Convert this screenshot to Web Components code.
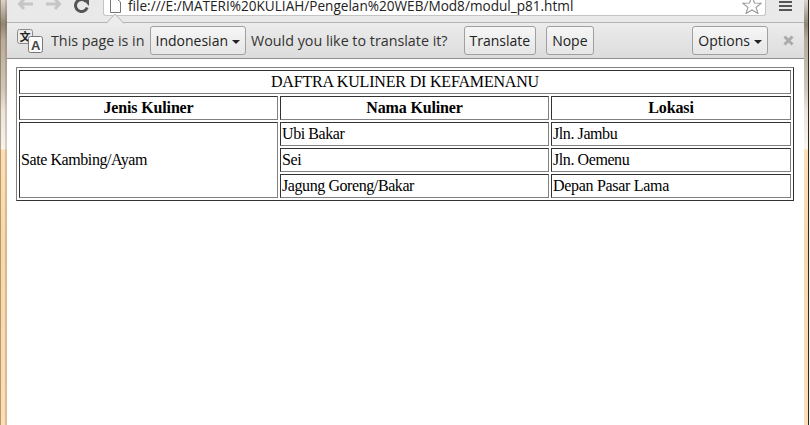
<!DOCTYPE html>
<html>
<head>
<meta charset="utf-8">
<title>modul_p81</title>
<style>
html, body { margin: 0; height: 100%; overflow: hidden; background: #fff; }
</style>
</head>
<body>
<browser-window>
  <browser-toolbar slot="chrome" url="file:///E:/MATERI%20KULIAH/Pengelan%20WEB/Mod8/modul_p81.html"></browser-toolbar>
  <translate-bar slot="chrome"></translate-bar>
  <kuliner-table></kuliner-table>
</browser-window>

<script>
const template_win = document.createElement("template");
template_win.innerHTML = `
<style>
:host {
  display: flex;
  flex-flow: column;
  height: 425px;
  width: 810px;
  box-sizing: border-box;
  padding: 0 6px 0 7px;
  background:
    linear-gradient(90deg, rgba(110,70,20,.45) 0 1px, transparent 1px 5px, rgba(110,70,20,.22) 5px 7px, transparent 7px 803px, rgba(90,80,70,.3) 803px 804px, transparent 804px 808px, #2e2a26 808px 809px, #f4f0ea 809px),
    linear-gradient(#d9d5cc 0, #8f8578 24px, #b5ab9e 40px, #cfc8bc 90px, #e9e4dc 110px, #f8f4ee 149px, #fbdfb6 150px, #f5d9ae 250px, #fadfb8 425px);
}
.inner { display: flex; flex-flow: column; flex: 1; }
.page { flex: 1; background: #fff; padding: 8px 0 0 9px; }
</style>
<div class="inner">
  <slot name="chrome"></slot>
  <div class="page"><slot></slot></div>
</div>
`;
class browserWindow extends HTMLElement {
  constructor() {
    super();
    this.attachShadow({ mode: "open" });
    this.shadowRoot.appendChild(template_win.content.cloneNode(true));
  }
}
window.customElements.define("browser-window", browserWindow);

const template_tb = document.createElement("template");
template_tb.innerHTML = `
<style>
:host {
  display: flex;
  align-items: flex-start;
  height: 23px;
  box-sizing: border-box;
  background: #e9e9e9;
  border-bottom: 1px solid #b4b4b4;
  position: relative;
}
.nav { display: flex; gap: 9px; padding: 0 0 0 10px; width: 96px; box-sizing: border-box; flex: none; }
.nav svg { display: block; }
.omni {
  flex: none;
  width: 663px;
  height: 16px;
  box-sizing: border-box;
  background: #fff;
  border: 1px solid #c4c4c4;
  border-top: 0;
  border-radius: 0 0 3px 3px;
  display: flex;
  align-items: flex-start;
  position: relative;
  padding-left: 6px;
}
.url {
  font: 13.6px/14px "Open Sans", "Liberation Sans", sans-serif;
  color: #222;
  white-space: nowrap;
  margin-left: 7px;
  margin-top: -1px;
}
.star { position: absolute; right: 3px; top: 0; }
.menu { margin-left: 13px; padding-top: 1px; }
.menu i { display: block; width: 13px; height: 2px; background: #555; margin-bottom: 2px; }
</style>
<div class="nav">
  <svg width="18" height="12" viewBox="0 0 18 12"><path d="M7 -1 L2.5 4 L7 9 M3 4 H16" fill="none" stroke="#c6c6c6" stroke-width="3"/></svg>
  <svg width="20" height="12" viewBox="0 0 20 12"><path d="M11 -1 L15.5 4 L11 9 M15 4 H2" fill="none" stroke="#c6c6c6" stroke-width="3"/></svg>
  <svg width="18" height="13" viewBox="0 0 18 13"><path d="M13 1.5 A6 6 0 1 0 14.2 7.5" fill="none" stroke="#555" stroke-width="3"/><path d="M9.5 -1 H16 V6 Z" fill="#555"/></svg>
</div>
<div class="omni">
  <svg width="11" height="13" viewBox="0 0 11 13"><path d="M.5 0 V12.5 H10.5 V2 L8 0" fill="#fff" stroke="#777"/></svg>
  <span class="url"></span>
  <svg class="star" width="20" height="14" viewBox="0 0 20 14"><path d="M10 -4 L12.5 3 L19 3.3 L14 7.5 L16 13.5 L10 10 L4 13.5 L6 7.5 L1 3.3 L7.5 3 Z" fill="#fff" stroke="#9a9a9a" stroke-width="1.1"/></svg>
</div>
<div class="menu"><i></i><i></i><i></i></div>
`;
class browserToolbar extends HTMLElement {
  constructor() {
    super();
    this.attachShadow({ mode: "open" });
    this.shadowRoot.appendChild(template_tb.content.cloneNode(true));
    this.shadowRoot.querySelector(".url").textContent = this.getAttribute("url");
  }
}
window.customElements.define("browser-toolbar", browserToolbar);

const template_btn = document.createElement("template");
template_btn.innerHTML = `
<style>
:host {
  display: inline-flex;
  align-items: center;
  height: 29px;
  box-sizing: border-box;
  padding: 0 5px;
  border: 1px solid #a0a0a0;
  border-radius: 3px;
  background: linear-gradient(#f6f6f6, #e6e6e6);
  white-space: nowrap;
  color: #222;
}
.caret { display: none; width: 0; height: 0; margin-left: 4px; margin-top: 2px; border: 4px solid transparent; border-top: 4px solid #222; border-bottom: 0; }
:host([menu]) .caret { display: block; }
</style>
<slot></slot><span class="caret"></span>
`;
class barButton extends HTMLElement {
  constructor() {
    super();
    this.attachShadow({ mode: "open" });
    this.shadowRoot.appendChild(template_btn.content.cloneNode(true));
  }
}
window.customElements.define("bar-button", barButton);

const template_tr = document.createElement("template");
template_tr.innerHTML = `
<style>
:host {
  display: flex;
  align-items: center;
  height: 36px;
  box-sizing: border-box;
  padding: 0 10px 0 9px;
  background: linear-gradient(#ececec, #dcdcdc);
  border-bottom: 1px solid #8e8e8e;
  font: 14px "Open Sans", "Liberation Sans", sans-serif;
  color: #333;
  position: relative;
}
.logo { margin-right: 8px; flex: none; }
.msg { font-size: 14.3px; }
.sp { width: 5px; flex: none; }
.push { flex: 1; }
.close { margin-left: 15px; }
.notch { position: absolute; left: 99px; top: -10px; }
</style>
<svg class="notch" width="20" height="11" viewBox="0 0 20 11"><path d="M0 10.5 L9 1 L18 10.5" fill="#ececec" stroke="#b4b4b4"/></svg>
<svg class="logo" width="27" height="26" viewBox="0 0 27 26">
  <rect x="1.5" y="1.5" width="15" height="14" rx="2" fill="#ececec" stroke="#8c8c8c"/>
  <text x="3.5" y="13" font-size="11" font-weight="700" font-family="Noto Sans CJK SC" fill="#222">文</text>
  <rect x="12.5" y="8.5" width="14" height="16" rx="2" fill="#fafafa" stroke="#777"/>
  <text x="15" y="21.5" font-size="13" font-weight="700" font-family="Liberation Sans" fill="#444">A</text>
</svg>
<span class="msg">This page is in</span><span class="sp"></span>
<bar-button menu>Indonesian</bar-button><span class="sp"></span>
<span class="msg">Would you like to translate it?</span><span class="sp" style="width:16px"></span>
<bar-button>Translate</bar-button><span class="sp" style="width:10px"></span>
<bar-button>Nope</bar-button>
<span class="push"></span>
<bar-button menu>Options</bar-button>
<svg class="close" width="11" height="11" viewBox="0 0 11 11"><path d="M1.5 1.5 L9.5 9.5 M9.5 1.5 L1.5 9.5" stroke="#aaa" stroke-width="3"/></svg>
`;
class translateBar extends HTMLElement {
  constructor() {
    super();
    this.attachShadow({ mode: "open" });
    this.shadowRoot.appendChild(template_tr.content.cloneNode(true));
  }
}
window.customElements.define("translate-bar", translateBar);

const template_kt = document.createElement("template");
template_kt.innerHTML = `
<style>
:host { display: block; font: 16px "Liberation Serif", "Times New Roman", serif; color: #000; }
table { width: 778px; border-collapse: separate; border-spacing: 2px; table-layout: fixed; border: 1px solid; border-color: #808080 #333 #333 #808080; }
td, th { padding: 1px; border: 1px solid; border-color: #333 #808080 #808080 #333; height: 24px; box-sizing: border-box; line-height: 18px; letter-spacing: -.42px; }
th { letter-spacing: -.15px; }
.c { text-align: center; letter-spacing: -.18px; }
.wide { letter-spacing: -.3px; }
</style>
<table>
  <colgroup><col style="width:259px"><col style="width:269px"><col style="width:240px"></colgroup>
  <tr><td class="c" colspan="3">DAFTRA KULINER DI KEFAMENANU</td></tr>
  <tr><th>Jenis Kuliner</th><th>Nama Kuliner</th><th>Lokasi</th></tr>
  <tr><td rowspan="3">Sate Kambing/Ayam</td><td>Ubi Bakar</td><td>Jln. Jambu</td></tr>
  <tr><td>Sei</td><td>Jln. Oemenu</td></tr>
  <tr><td>Jagung Goreng/Bakar</td><td class="wide">Depan Pasar Lama</td></tr>
</table>
`;
class kulinerTable extends HTMLElement {
  constructor() {
    super();
    this.attachShadow({ mode: "open" });
    this.shadowRoot.appendChild(template_kt.content.cloneNode(true));
  }
}
window.customElements.define("kuliner-table", kulinerTable);
</script>
</body>
</html>
